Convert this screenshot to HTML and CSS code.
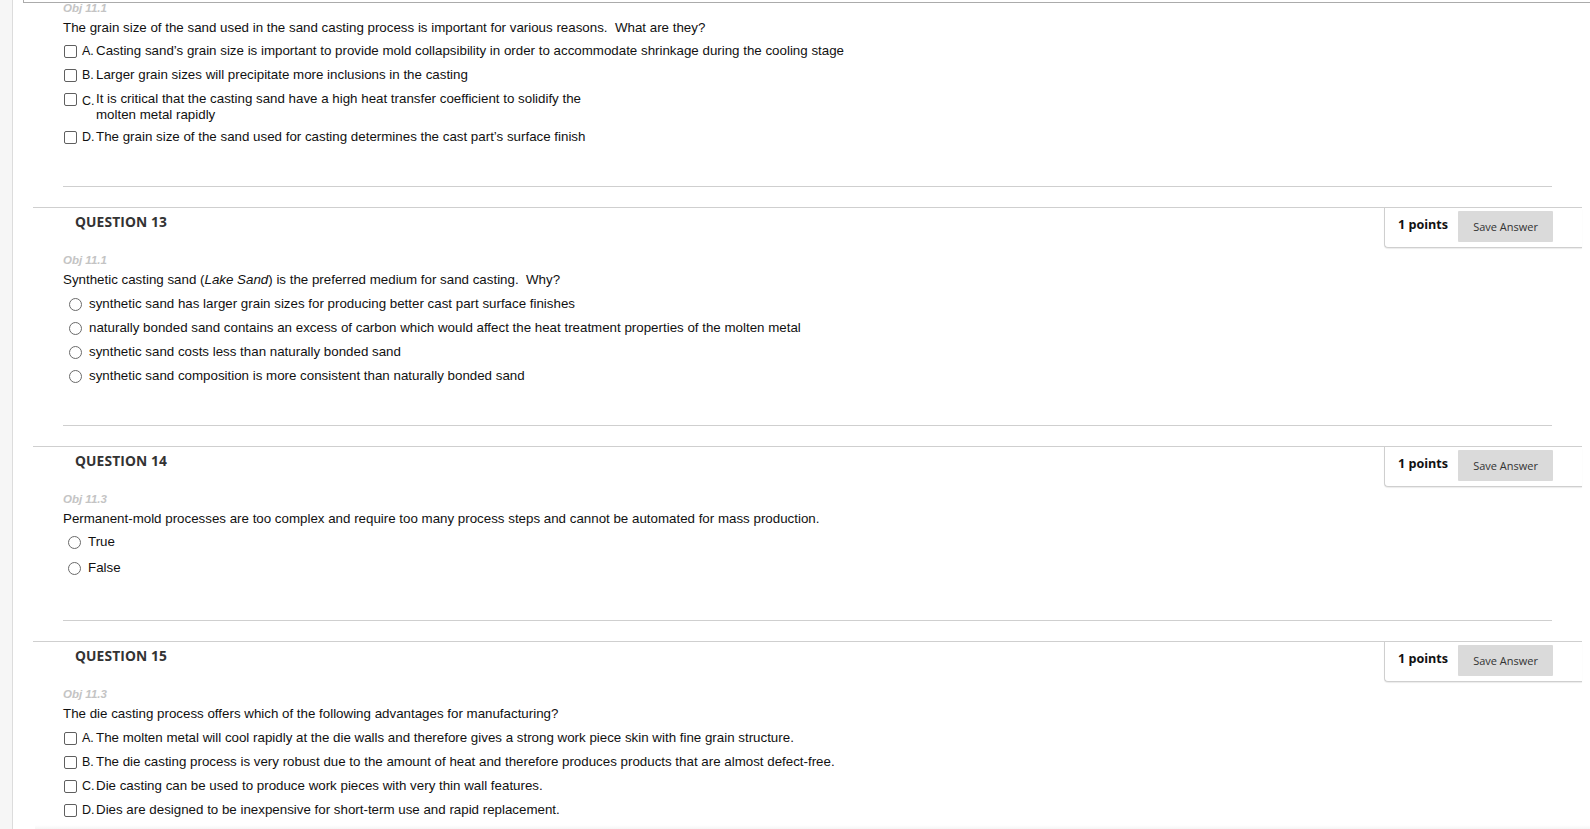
FILE: index.html
```html
<!DOCTYPE html>
<html>
<head>
<meta charset="utf-8">
<title>Test</title>
<link rel="stylesheet" href="styles.css">
</head>
<body>
<div class="page">
  <aside class="rail"></aside>
  <main class="main">
    <div class="prev-edge"></div>

    <section class="question q-partial">
      <div class="qbody">
        <div class="obj">Obj 11.1</div>
        <div class="qtext">The grain size of the sand used in the sand casting process is important for various reasons.&nbsp; What are they?</div>
        <ul class="opts">
          <li class="opt"><span class="cb"></span><span class="lbl">A.</span><span class="otext">Casting sand’s grain size is important to provide mold collapsibility in order to accommodate shrinkage during the cooling stage</span></li>
          <li class="opt"><span class="cb"></span><span class="lbl">B.</span><span class="otext">Larger grain sizes will precipitate more inclusions in the casting</span></li>
          <li class="opt"><span class="cb"></span><span class="lbl lbl-low">C.</span><span class="otext otext-narrow">It is critical that the casting sand have a high heat transfer coefficient to solidify the molten metal rapidly</span></li>
          <li class="opt"><span class="cb"></span><span class="lbl">D.</span><span class="otext">The grain size of the sand used for casting determines the cast part’s surface finish</span></li>
        </ul>
        <hr class="sep">
      </div>
    </section>

    <section class="question">
      <header class="qhead">
        <h3 class="qtitle">QUESTION 13</h3>
        <div class="points"><span class="pts">1 points</span><button class="save">Save Answer</button></div>
      </header>
      <div class="qbody">
        <div class="obj">Obj 11.1</div>
        <div class="qtext">Synthetic casting sand (<em>Lake Sand</em>) is the preferred medium for sand casting.&nbsp; Why?</div>
        <ul class="opts">
          <li class="opt"><span class="rb"></span><span class="otext">synthetic sand has larger grain sizes for producing better cast part surface finishes</span></li>
          <li class="opt"><span class="rb"></span><span class="otext">naturally bonded sand contains an excess of carbon which would affect the heat treatment properties of the molten metal</span></li>
          <li class="opt"><span class="rb"></span><span class="otext">synthetic sand costs less than naturally bonded sand</span></li>
          <li class="opt"><span class="rb"></span><span class="otext">synthetic sand composition is more consistent than naturally bonded sand</span></li>
        </ul>
        <hr class="sep">
      </div>
    </section>

    <section class="question">
      <header class="qhead">
        <h3 class="qtitle">QUESTION 14</h3>
        <div class="points"><span class="pts">1 points</span><button class="save">Save Answer</button></div>
      </header>
      <div class="qbody">
        <div class="obj">Obj 11.3</div>
        <div class="qtext">Permanent-mold processes are too complex and require too many process steps and cannot be automated for mass production.</div>
        <ul class="opts opts-tf">
          <li class="opt opt-tf"><span class="rb rb-tf"></span><span class="otext tf">True</span></li>
          <li class="opt opt-tf"><span class="rb rb-tf"></span><span class="otext tf">False</span></li>
        </ul>
        <hr class="sep">
      </div>
    </section>

    <section class="question">
      <header class="qhead">
        <h3 class="qtitle">QUESTION 15</h3>
        <div class="points"><span class="pts">1 points</span><button class="save">Save Answer</button></div>
      </header>
      <div class="qbody">
        <div class="obj">Obj 11.3</div>
        <div class="qtext">The die casting process offers which of the following advantages for manufacturing?</div>
        <ul class="opts">
          <li class="opt"><span class="cb"></span><span class="lbl">A.</span><span class="otext">The molten metal will cool rapidly at the die walls and therefore gives a strong work piece skin with fine grain structure.</span></li>
          <li class="opt"><span class="cb"></span><span class="lbl">B.</span><span class="otext">The die casting process is very robust due to the amount of heat and therefore produces products that are almost defect-free.</span></li>
          <li class="opt"><span class="cb"></span><span class="lbl">C.</span><span class="otext">Die casting can be used to produce work pieces with very thin wall features.</span></li>
          <li class="opt"><span class="cb"></span><span class="lbl">D.</span><span class="otext">Dies are designed to be inexpensive for short-term use and rapid replacement.</span></li>
        </ul>
      </div>
    </section>
    <div class="bottom-shadow"></div>
  </main>
</div>
</body>
</html>
```

FILE: styles.css
```css
* { box-sizing: border-box; }
html, body {
  margin: 0;
  padding: 0;
  background: #fff;
  height: 829px;
  overflow: hidden;
}
body {
  font-family: "Liberation Sans", Arial, sans-serif;
  font-size: 13.33px;
  color: #111;
}
.page {
  display: flex;
  height: 829px;
}
.rail {
  width: 13px;
  flex: 0 0 13px;
  background: #f6f6f6;
  border-right: 1px solid #dcdcdc;
}
.main {
  flex: 1;
  min-width: 0;
}
.prev-edge {
  margin-left: 10px;
  height: 3px;
  border-left: 1px solid #ababab;
  border-bottom: 1px solid #ababab;
}
.question {
  margin: 0 8px 20px 20px;
  border-top: 1px solid #cfcfcf;
}
.q-partial {
  border-top: 0;
}
.q-partial .qbody {
  margin-top: -5px;
  padding-top: 0;
}
.qhead {
  position: relative;
  height: 28px;
  display: flex;
  align-items: center;
  padding-left: 42px;
}
.qtitle {
  margin: 0;
  font-family: "Open Sans", sans-serif;
  font-weight: 700;
  font-size: 13.8px;
  line-height: 18px;
  color: #333;
  letter-spacing: 0.1px;
}
.points {
  position: absolute;
  top: 0;
  right: 0;
  width: 198px;
  height: 40px;
  display: flex;
  align-items: flex-start;
  padding: 3px 31px 0 13px;
  border-left: 1px solid #cfcfcf;
  border-bottom: 1px solid #cfcfcf;
  border-bottom-left-radius: 4px;
  box-shadow: 0 1px 1px rgba(0,0,0,0.08);
  background: #fff;
}
.pts {
  flex: 0 0 auto;
  white-space: nowrap;
  font-family: "Open Sans", sans-serif;
  font-weight: 700;
  font-size: 12.6px;
  line-height: 28px;
  color: #111;
  margin-right: 10px;
}
.save {
  flex: 0 0 95px;
  margin-left: auto;
  width: 95px;
  height: 31px;
  border: 0;
  border-radius: 1px;
  background: #dadada;
  font-family: "Open Sans", sans-serif;
  font-size: 11px;
  color: #333;
  padding: 0;
  white-space: nowrap;
}
.qbody {
  padding: 14px 30px 0 30px;
}
.obj {
  font-weight: 700;
  font-style: italic;
  font-size: 11.5px;
  line-height: 20px;
  color: #c4c4c4;
}
.qtext {
  line-height: 20px;
}
.opts {
  list-style: none;
  margin: 2px 0 0 0;
  padding: 0;
}
.q-partial .opts {
  margin-top: 1px;
}
.opts-tf {
  margin: 0;
  padding-bottom: 2px;
}
.opt {
  display: flex;
  align-items: flex-start;
  padding: 3px 0;
  min-height: 24px;
}
.opt-tf {
  min-height: 26px;
  padding: 4px 0;
}
.cb {
  flex: 0 0 13px;
  width: 13px;
  height: 13px;
  margin: 3px 4px 0 1px;
  border: 1px solid #5f5f5f;
  border-radius: 2px;
  background: #fff;
}
.lbl {
  flex: 0 0 15px;
  line-height: 18px;
  font-size: 12.5px;
  padding-left: 1px;
}
.lbl-low {
  padding-top: 2px;
}
.otext {
  line-height: 18px;
}
.opt .otext-narrow {
  line-height: 15.5px;
  max-width: 490px;
  padding-top: 1px;
}
.rb {
  flex: 0 0 13px;
  width: 13px;
  height: 13px;
  margin: 3px 7px 0 6px;
  border: 1px solid #6a6a6a;
  border-radius: 50%;
  background: #fff;
}
.rb-tf {
  margin: 3px 7px 0 5px;
}
.sep {
  margin: 37px 0 0 0;
  border: 0;
  border-top: 1px solid #cfcfcf;
  height: 0;
}
.bottom-shadow {
  margin: -17px 0 0 22px;
  height: 8px;
  background: linear-gradient(to bottom, rgba(0,0,0,0), rgba(0,0,0,0.08));
}
```
